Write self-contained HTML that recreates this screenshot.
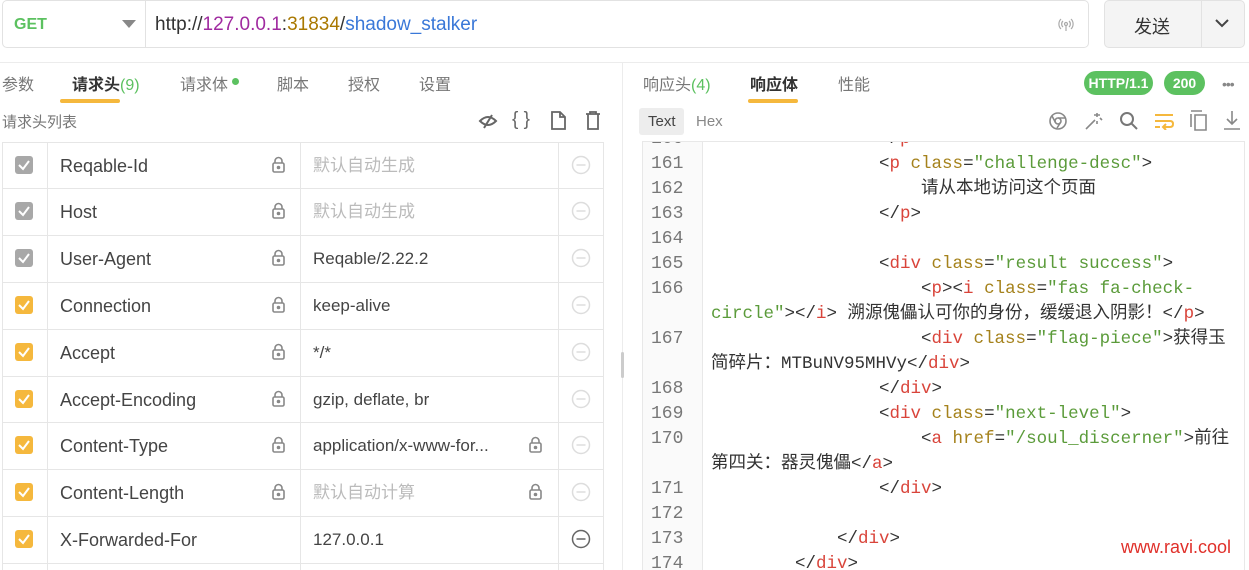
<!DOCTYPE html>
<html><head><meta charset="utf-8"><style>
*{margin:0;padding:0;box-sizing:border-box}
html,body{width:1249px;height:570px;overflow:hidden}
body{background:#fff;font-family:"Liberation Sans","Noto Sans CJK SC",sans-serif;color:#444;position:relative}
#wrap{position:absolute;left:0;top:0;width:1249px;height:570px;overflow:hidden}
.a{position:absolute;white-space:nowrap}
.cb{position:absolute;width:18px;height:18px;border-radius:3px}
.cb svg{position:absolute;left:2px;top:2px}
.mono{font-family:"Liberation Mono","Noto Sans CJK SC",monospace;font-size:18px;line-height:24px;color:#333}
.t{color:#d9443a}.at{color:#a5821c}.s{color:#5b9b3a}
.ln{position:absolute;left:8px;width:40px;font-family:"Liberation Mono",monospace;font-size:18px;line-height:24px;color:#777}
.tx{line-height:22px}
</style></head><body><div id="wrap">
<div class="a" style="left:2px;top:0;width:1087px;height:48px;border:1px solid #e2e2e2;border-radius:5px"></div>
<div class="a" style="left:145px;top:1px;width:1px;height:46px;background:#e2e2e2"></div>
<div class="a" style="left:14px;top:16px;font-size:16px;font-weight:bold;color:#5cc160">GET</div>
<svg class="a" style="left:122px;top:20px" width="14" height="8"><path d="M0 0L14 0L7 8Z" fill="#888"/></svg>
<div class="a" style="left:155px;top:14px;font-size:19px;color:#333">http://<span style="color:#a02aa0">127.0.0.1</span>:<span style="color:#a97800">31834</span>/<span style="color:#3a78d8">shadow_stalker</span></div>
<svg class="a" style="left:1058px;top:16px" width="16" height="16" fill="none" stroke="#aaa" stroke-width="1.2"><circle cx="8" cy="8" r="1.5"/><path d="M8 10V15M5 5a4 4 0 0 0 0 6M11 5a4 4 0 0 1 0 6M3 3a7 7 0 0 0 0 10M13 3a7 7 0 0 1 0 10"/></svg>
<div class="a" style="left:1104px;top:0;width:141px;height:48px;background:#f4f4f4;border:1px solid #e2e2e2;border-radius:5px"></div>
<div class="a" style="left:1201px;top:1px;width:1px;height:46px;background:#e2e2e2"></div>
<div class="a" style="left:1134px;top:13px;font-size:18px;color:#333">发送</div>
<svg class="a" style="left:1214px;top:18px" width="16" height="10" fill="none" stroke="#444" stroke-width="2"><path d="M2 2L8 8L14 2"/></svg>
<div class="a" style="left:0;top:62px;width:1249px;height:1px;background:#ececec"></div>
<div class="a" style="left:2px;top:71px;font-size:16px;color:#777">参数</div>
<div class="a" style="left:72px;top:71px;font-size:16px;color:#333;font-weight:bold">请求头<span style="color:#5cc160;font-weight:normal">(9)</span></div>
<div class="a" style="left:60px;top:99px;width:60px;height:4px;background:#f5b83d;border-radius:2px"></div>
<div class="a" style="left:180px;top:71px;font-size:16px;color:#777">请求体</div>
<div class="a" style="left:232px;top:78px;width:7px;height:7px;border-radius:50%;background:#5cc160"></div>
<div class="a" style="left:277px;top:71px;font-size:16px;color:#777">脚本</div>
<div class="a" style="left:348px;top:71px;font-size:16px;color:#777">授权</div>
<div class="a" style="left:419px;top:71px;font-size:16px;color:#777">设置</div>
<div class="a" style="left:2px;top:111px;font-size:15px;color:#777">请求头列表</div>
<svg class="a" style="left:478px;top:112px" width="20" height="18" fill="none" stroke="#666" stroke-width="2"><path d="M2 9Q10 1 18 9Q10 17 2 9Z"/><path d="M14 3L6 16"/></svg>
<div class="a" style="left:512px;top:109px;font-size:19px;color:#666">{ }</div>
<svg class="a" style="left:550px;top:111px" width="16" height="19" fill="none" stroke="#666" stroke-width="1.8"><path d="M2 1H10L15 6V18H2Z M10 1V6H15"/></svg>
<svg class="a" style="left:585px;top:111px" width="16" height="19" fill="none" stroke="#666" stroke-width="1.8"><path d="M1 3H15M5 3V1H11V3M3 3V18H13V3"/></svg>
<div class="a" style="left:2px;top:142px;width:602px;height:428px;border:1px solid #e6e6e6;border-bottom:none"></div>
<div id="rows"></div>
<div class="a" style="left:622px;top:63px;width:1px;height:507px;background:#ececec"></div>
<div class="a" style="left:621px;top:352px;width:3px;height:26px;background:#ccc;border-radius:2px"></div>
<div class="a" style="left:643px;top:71px;font-size:16px;color:#777">响应头<span style="color:#5cc160">(4)</span></div>
<div class="a" style="left:750px;top:71px;font-size:16px;color:#333;font-weight:bold">响应体</div>
<div class="a" style="left:748px;top:99px;width:50px;height:4px;background:#f5b83d;border-radius:2px"></div>
<div class="a" style="left:838px;top:71px;font-size:16px;color:#777">性能</div>
<div class="a" style="left:1084px;top:71px;width:69px;height:24px;border-radius:12px;background:#5cc160;color:#fff;font-size:14px;font-weight:bold;text-align:center;line-height:24px">HTTP/1.1</div>
<div class="a" style="left:1164px;top:71px;width:41px;height:24px;border-radius:12px;background:#5cc160;color:#fff;font-size:14px;font-weight:bold;text-align:center;line-height:24px">200</div>
<div class="a" style="left:1222px;top:76px;font-size:14px;color:#888;letter-spacing:-1px">•••</div>
<div class="a" style="left:639px;top:108px;width:45px;height:27px;background:#ededed;border-radius:3px"></div>
<div class="a" style="left:648px;top:113px;font-size:15px;color:#444">Text</div>
<div class="a" style="left:696px;top:113px;font-size:15px;color:#888">Hex</div>
<svg class="a" style="left:1048px;top:111px" width="20" height="20" fill="none" stroke="#888" stroke-width="1.6"><circle cx="10" cy="10" r="8"/><circle cx="10" cy="10" r="3"/><path d="M10 7H17M7.5 11.5L4 5M12.5 11.5L9 17"/></svg>
<svg class="a" style="left:1084px;top:111px" width="20" height="20" fill="none" stroke="#888" stroke-width="1.6"><path d="M2 18L11 9M13 2V6M10 4H16M16 7L18 9M13 10V13"/></svg>
<svg class="a" style="left:1119px;top:111px" width="20" height="20" fill="none" stroke="#777" stroke-width="2"><circle cx="8" cy="8" r="6"/><path d="M12.5 12.5L18 18"/></svg>
<svg class="a" style="left:1154px;top:112px" width="20" height="18" fill="none" stroke="#f5b83d" stroke-width="2"><path d="M1 3H19M1 9H16Q19 9 19 12Q19 15 16 15H10M12 12L9 15L12 18M1 15H6"/></svg>
<svg class="a" style="left:1190px;top:110px" width="18" height="21" fill="none" stroke="#888" stroke-width="1.6"><path d="M1 4V17M1 1H12M5 5H16V20H5Z"/></svg>
<svg class="a" style="left:1222px;top:110px" width="20" height="21" fill="none" stroke="#888" stroke-width="1.6"><path d="M10 1V14M5 9L10 14L15 9M2 19H18"/></svg>
<div class="a" style="left:642px;top:141px;width:603px;height:429px;border:1px solid #e8e8e8;border-bottom:none;background:#fff;overflow:hidden">
<div class="a" style="left:0;top:0;width:60px;height:429px;background:#fafafa;border-right:1px solid #e8e8e8"></div>
<div id="code"></div>
</div>
<div class="a" style="left:1121px;top:537px;font-size:18px;color:#e0302a">www.ravi.cool</div>
</div>
<script>
var rows=[["g","Reqable-Id",1,"默认自动生成",1,0,0],["g","Host",1,"默认自动生成",1,0,0],["g","User-Agent",1,"Reqable/2.22.2",0,0,0],["o","Connection",1,"keep-alive",0,0,0],["o","Accept",1,"*/*",0,0,0],["o","Accept-Encoding",1,"gzip, deflate, br",0,0,0],["o","Content-Type",1,"application/x-www-for...",0,1,0],["o","Content-Length",1,"默认自动计算",1,1,0],["o","X-Forwarded-For",0,"127.0.0.1",0,0,1]];
var tops=[142,188,235,282,329,376,422,469,516,563];
var lock='<svg width="13" height="17" fill="none" stroke="#888" stroke-width="1.6"><path d="M3 7V5a3.5 3.5 0 0 1 7 0V7"/><rect x="1" y="7" width="11" height="9" rx="1.5"/><circle cx="6.5" cy="11.5" r="1" fill="#888"/></svg>';
var h='';
for(var i=0;i<rows.length+1;i++){var t=tops[i];var hh=Math.min(47,570-t);
h+='<div class="a" style="left:2px;top:'+t+'px;width:602px;height:1px;background:#e6e6e6"></div>';
h+='<div class="a" style="left:47px;top:'+t+'px;width:1px;height:'+hh+'px;background:#e6e6e6"></div><div class="a" style="left:300px;top:'+t+'px;width:1px;height:'+hh+'px;background:#e6e6e6"></div><div class="a" style="left:558px;top:'+t+'px;width:1px;height:'+hh+'px;background:#e6e6e6"></div>';
if(i>=rows.length)break;var r=rows[i],c=t+23;
h+='<div class="cb" style="left:15px;top:'+(c-9)+'px;background:'+(r[0]=="g"?"#a8a8a8":"#f5b83d")+'"><svg width="14" height="14" fill="none" stroke="#fff" stroke-width="2"><path d="M2 7L6 11L12 3"/></svg></div>';
h+='<div class="a tx" style="left:60px;top:'+(c-10)+'px;font-size:18px;color:#444">'+r[1]+'</div>';
if(r[2])h+='<div class="a" style="left:272px;top:'+(c-9)+'px">'+lock+'</div>';
h+='<div class="a tx" style="left:313px;top:'+(c-10)+'px;font-size:17px;color:'+(r[4]?"#bbb":"#444")+'">'+r[3]+'</div>';
if(r[5])h+='<div class="a" style="left:529px;top:'+(c-9)+'px">'+lock+'</div>';
h+='<svg class="a" style="left:571px;top:'+(c-10)+'px" width="20" height="20" fill="none" stroke="'+(r[6]?"#666":"#ddd")+'" stroke-width="1.5"><circle cx="10" cy="10" r="8.5"/><path d="M5.5 10H14.5"/></svg>';}
document.getElementById('rows').innerHTML=h;
var L=[[138,"160",878,'&lt;/<span class="t">p</span>&gt;'],[163,"161",878,'&lt;<span class="t">p</span> <span class="at">class</span>=<span class="s">"challenge-desc"</span>&gt;'],[188,"162",920,'请从本地访问这个页面'],[213,"163",878,'&lt;/<span class="t">p</span>&gt;'],[238,"164",0,''],[263,"165",878,'&lt;<span class="t">div</span> <span class="at">class</span>=<span class="s">"result success"</span>&gt;'],[288,"166",920,'&lt;<span class="t">p</span>&gt;&lt;<span class="t">i</span> <span class="at">class</span>=<span class="s">"fas fa-check-</span>'],[313,"",710,'<span class="s">circle"</span>&gt;&lt;/<span class="t">i</span>&gt; 溯源傀儡认可你的身份，缓缓退入阴影！&lt;/<span class="t">p</span>&gt;'],[338,"167",920,'&lt;<span class="t">div</span> <span class="at">class</span>=<span class="s">"flag-piece"</span>&gt;获得玉'],[363,"",710,'简碎片：MTBuNV95MHVy&lt;/<span class="t">div</span>&gt;'],[388,"168",878,'&lt;/<span class="t">div</span>&gt;'],[413,"169",878,'&lt;<span class="t">div</span> <span class="at">class</span>=<span class="s">"next-level"</span>&gt;'],[438,"170",920,'&lt;<span class="t">a</span> <span class="at">href</span>=<span class="s">"/soul_discerner"</span>&gt;前往'],[463,"",710,'第四关：器灵傀儡&lt;/<span class="t">a</span>&gt;'],[488,"171",878,'&lt;/<span class="t">div</span>&gt;'],[513,"172",0,''],[538,"173",836,'&lt;/<span class="t">div</span>&gt;'],[563,"174",794,'&lt;/<span class="t">div</span>&gt;']];
var g='';
for(var j=0;j<L.length;j++){var y=L[j][0]-12-141;if(L[j][1])g+='<div class="ln a" style="top:'+y+'px">'+L[j][1]+'</div>';
if(L[j][3])g+='<div class="a mono" style="left:'+(L[j][2]-642)+'px;top:'+y+'px;font-size:17.5px">'+L[j][3]+'</div>';}
document.getElementById('code').innerHTML=g;
</script>
</body></html>
